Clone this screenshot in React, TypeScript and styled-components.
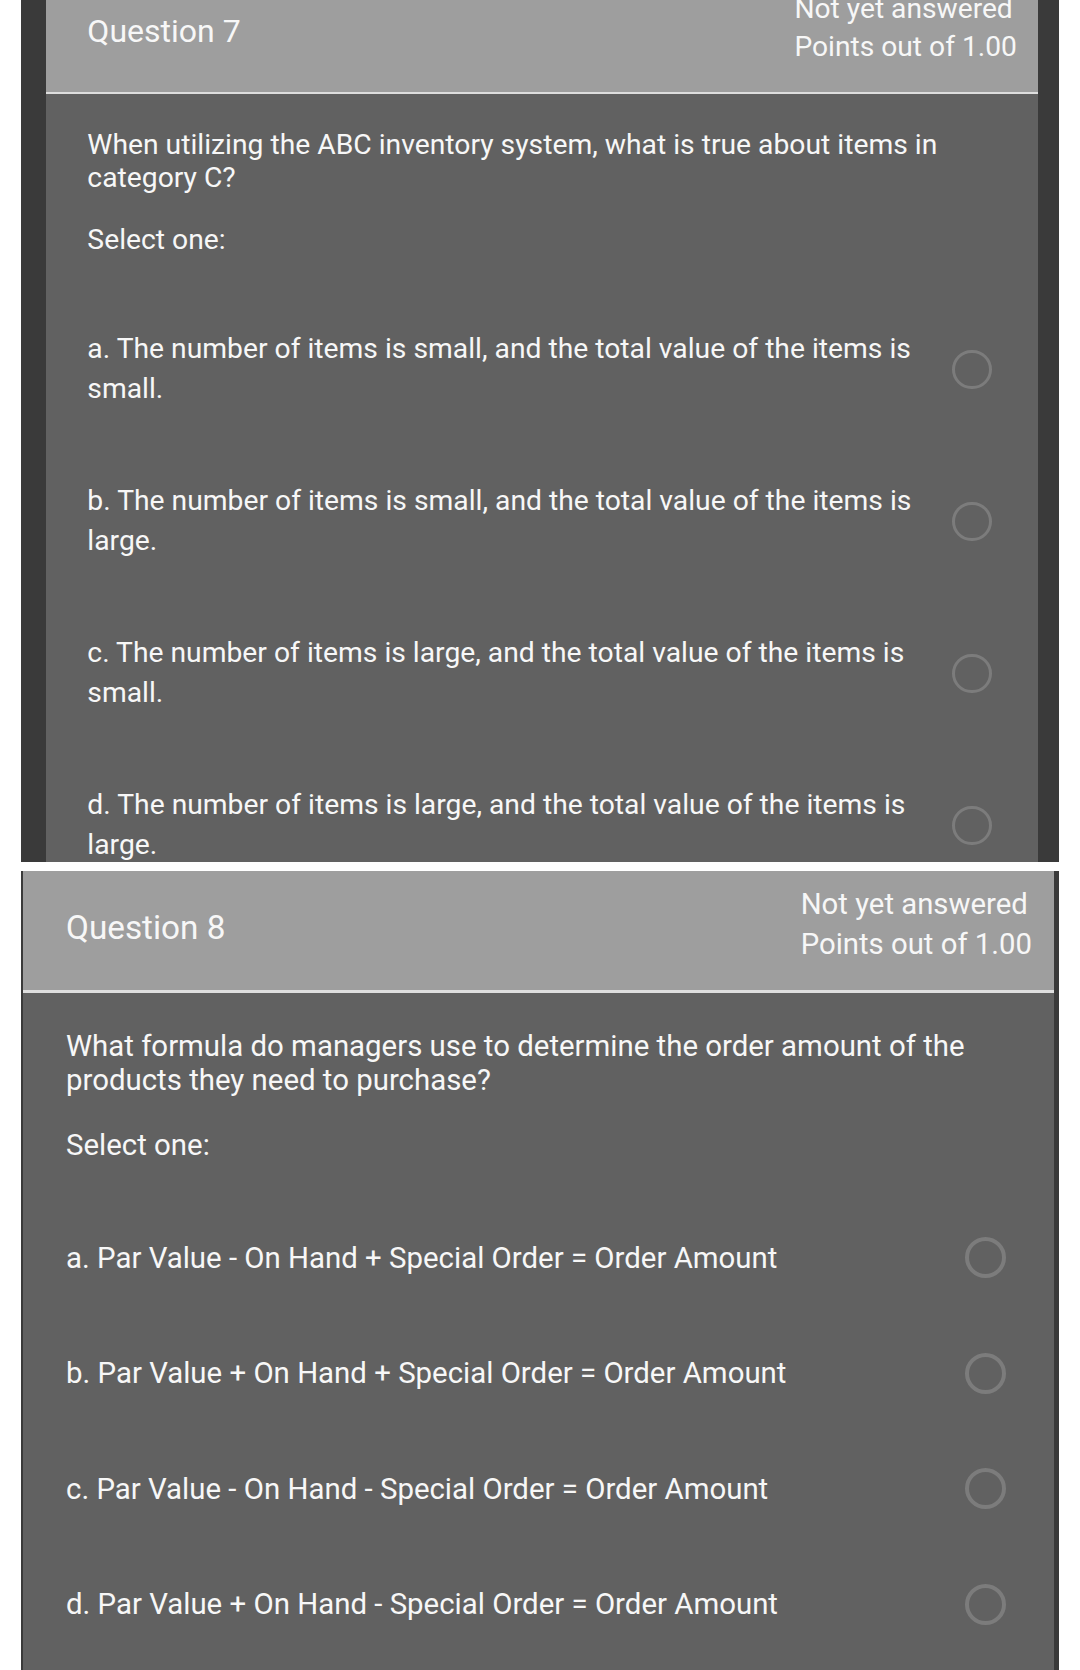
import React from "react";
import styled, { createGlobalStyle } from "styled-components";

interface Question {
  number: number;
  text: string;
  options: string[];
}

const questions: Question[] = [
  {
    number: 7,
    text: "When utilizing the ABC inventory system, what is true about items in category C?",
    options: [
      "a. The number of items is small, and the total value of the items is small.",
      "b. The number of items is small, and the total value of the items is large.",
      "c. The number of items is large, and the total value of the items is small.",
      "d. The number of items is large, and the total value of the items is large.",
    ],
  },
  {
    number: 8,
    text: "What formula do managers use to determine the order amount of the products they need to purchase?",
    options: [
      "a. Par Value - On Hand + Special Order = Order Amount",
      "b. Par Value + On Hand + Special Order = Order Amount",
      "c. Par Value - On Hand - Special Order = Order Amount",
      "d. Par Value + On Hand - Special Order = Order Amount",
    ],
  },
];

// each screenshot is a crop of the same quiz page, taken at a slightly different zoom
const shots = [
  { scale: 0.962, height: 862, offset: -23, frame: "wide" as const },
  { scale: 1, height: 799, offset: 0, frame: "thin" as const },
];

const GlobalStyle = createGlobalStyle`
  html, body {
    margin: 0;
    padding: 0;
    background: #ffffff;
  }
  body {
    font-family: Roboto, "Liberation Sans", Arial, sans-serif;
    -webkit-font-smoothing: antialiased;
  }
`;

const u = (n: number) => `calc(var(--u) * ${n})`;

export default function App() {
  return (
    <>
      <GlobalStyle />
      <Side>
        {questions.map((q, i) => {
          const shot = shots[i];
          return (
            <Shot key={q.number} $frame={shot.frame} style={{ height: shot.height }}>
              <Card style={{ "--u": `${shot.scale}px`, marginTop: shot.offset } as React.CSSProperties}>
                <Header>
                  <Title>Question {q.number}</Title>
                  <State>
                    <div>Not yet answered</div>
                    <div>Points out of 1.00</div>
                  </State>
                </Header>
                <Body>
                  <QuestionText>{q.text}</QuestionText>
                  <Prompt>Select one:</Prompt>
                  <Options>
                    {q.options.map((o) => (
                      <Option key={o}>
                        <OptionLabel>{o}</OptionLabel>
                        <Radio />
                      </Option>
                    ))}
                  </Options>
                </Body>
              </Card>
            </Shot>
          );
        })}
      </Side>
    </>
  );
}

const Side = styled.main`
  display: flex;
  flex-direction: column;
  gap: 9px;
  padding: 0 21px;
  height: 1670px;
  overflow: hidden;
`;

const Shot = styled.section<{ $frame: "wide" | "thin" }>`
  display: flex;
  flex-direction: column;
  background: #3a3a3a;
  overflow: hidden;
  flex-shrink: 0;
  box-sizing: border-box;
  padding: ${(p) => (p.$frame === "wide" ? "0 21px 0 25px" : "0 5px 0 2px")};
`;

const Card = styled.div`
  flex: 1 0 auto;
  background: #616161;
  color: #f7f7f7;
`;

const Header = styled.div`
  display: flex;
  justify-content: space-between;
  align-items: center;
  box-sizing: border-box;
  height: ${u(122)};
  padding: ${u(14)} ${u(22)} ${u(27)} ${u(43)};
  background: #9e9e9e;
  border-bottom: ${u(3)} solid #dedede;
`;

const Title = styled.div`
  font-size: ${u(33.3)};
  margin-top: ${u(6)};
`;

const State = styled.div`
  white-space: nowrap;
  font-size: ${u(29.3)};
  line-height: ${u(40)};
`;

const Body = styled.div`
  padding: ${u(36)} ${u(48)} 0 ${u(43)};
`;

const QuestionText = styled.div`
  font-size: ${u(29.4)};
  line-height: ${u(34)};
  padding-right: ${u(5)};
`;

const Prompt = styled.div`
  font-size: ${u(29.4)};
  line-height: ${u(34)};
  margin-top: ${u(31)};
`;

const Options = styled.div`
  margin-top: ${u(38)};
`;

const Option = styled.div`
  display: flex;
  align-items: center;
  gap: ${u(30)};
  padding: ${u(36.5)} 0;
`;

const OptionLabel = styled.div`
  flex: 1;
  font-size: ${u(29.4)};
  line-height: ${u(42.5)};
`;

const Radio = styled.span`
  flex-shrink: 0;
  box-sizing: border-box;
  width: ${u(41)};
  height: ${u(41)};
  border-radius: 50%;
  border: ${u(4)} solid #7c7c7c;
`;
